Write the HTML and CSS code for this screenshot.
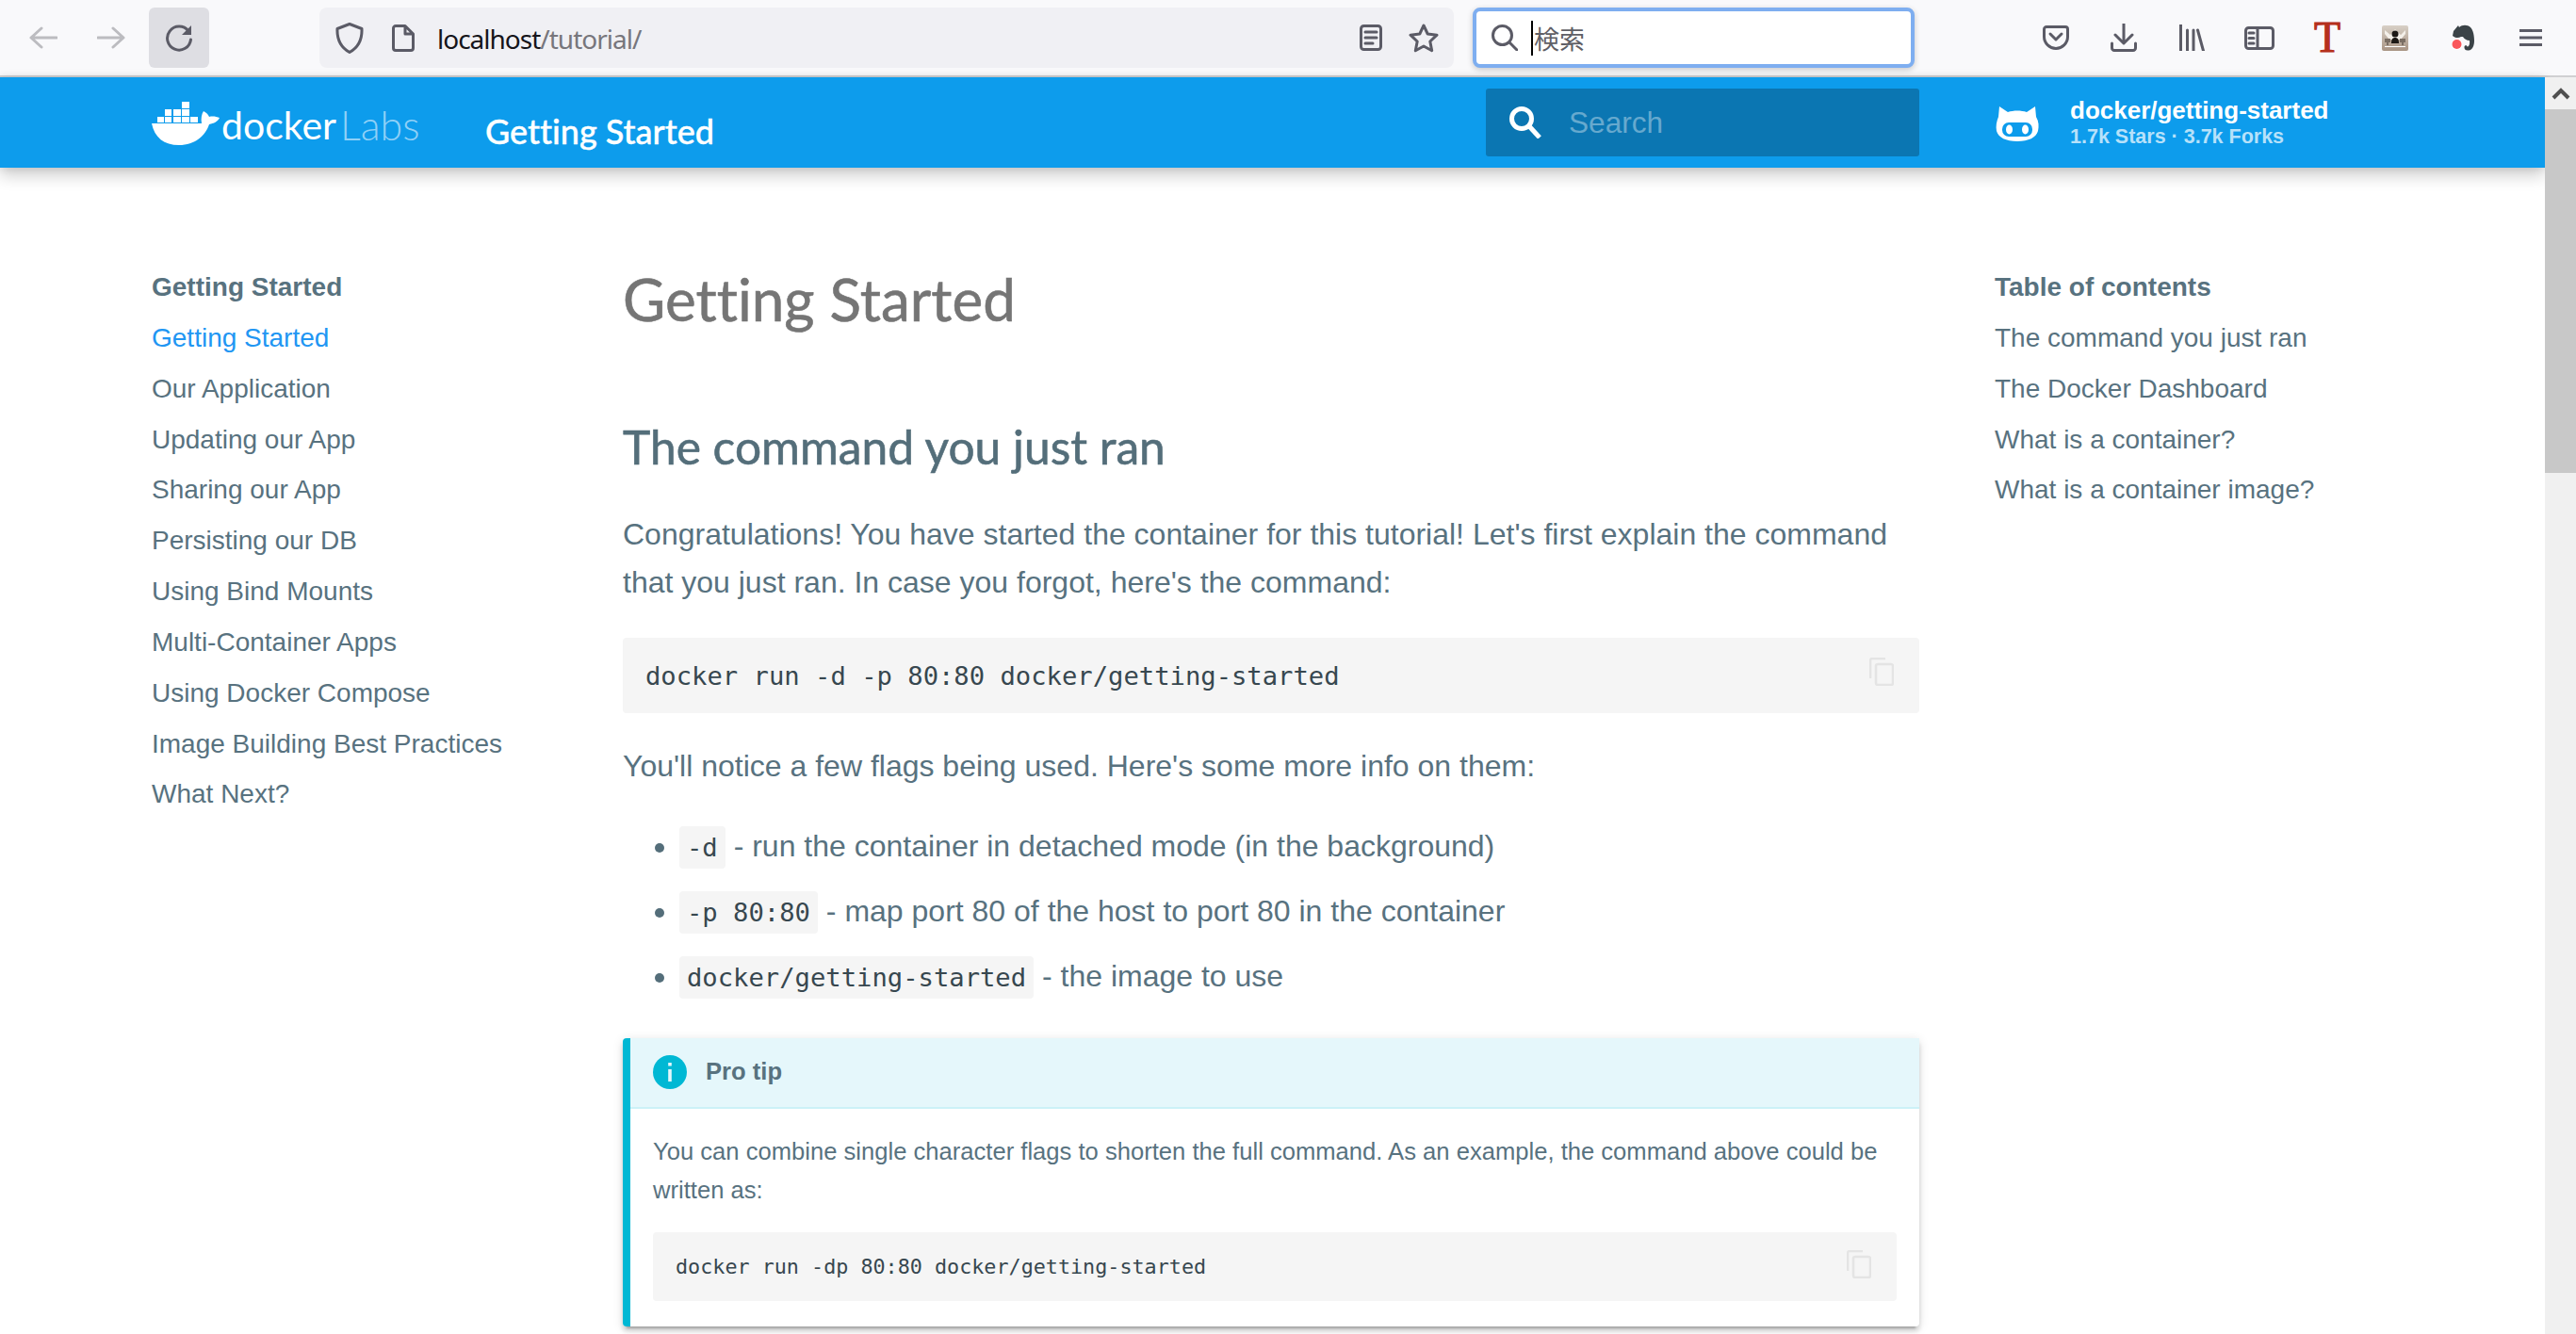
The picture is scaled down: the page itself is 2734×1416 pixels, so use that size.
FILE: index.html
```html
<!DOCTYPE html>
<html lang="en">
<head>
<meta charset="utf-8">
<title>Getting Started - Docker Labs</title>
<link rel="stylesheet" href="styles.css">
</head>
<body>
<div class="toolbar">
  <div class="tb-btn"><svg width="30" height="24" viewBox="0 0 30 24" class="ico-dim"><path d="M29 12H3M13 2 2 12l11 10"/></svg></div>
  <div class="tb-btn"><svg width="30" height="24" viewBox="0 0 30 24" class="ico-dim"><path d="M1 12h26M17 2l11 10-11 10"/></svg></div>
  <div class="tb-btn tb-active"><svg width="30" height="32" viewBox="0 0 30 32" class="ico"><path d="M25 9A12.5 12.5 0 1 0 27.5 18"/><path class="fill" d="M28 3v10H18z"/></svg></div>
  <div class="urlbar">
    <svg class="ico shield" width="30" height="33" viewBox="0 0 30 33"><path d="M15 1.500 28 6.500c.5 12-4 20-13 25C6 26.500 1.500 18.500 2 6.500z"/></svg>
    <svg class="ico pageico" width="24" height="29" viewBox="0 0 24 29"><path d="M4 1.500h10l8.500 8.500v15a2.500 2.500 0 0 1-2.500 2.500H4A2.500 2.500 0 0 1 1.500 25V4A2.500 2.500 0 0 1 4 1.500zM14 1.500V10h8.500"/></svg>
    <span class="host">localhost</span><span class="path">/tutorial/</span>
    <svg class="ico reader" width="24" height="28" viewBox="0 0 24 28"><rect x="1.500" y="1.500" width="21" height="25" rx="3"/><path d="M6 8h12M6 14h12M6 20h8"/></svg>
    <svg class="ico star" width="32" height="31" viewBox="0 0 32 31"><path d="M16 2l4.200 9 9.800 1.200-7.200 6.800 1.900 9.700L16 24l-8.700 4.700L9.200 19 2 12.200 11.800 11z"/></svg>
  </div>
  <div class="websearch">
    <svg class="ico" width="28" height="28" viewBox="0 0 28 28"><circle cx="11.500" cy="11.500" r="10"/><path d="M19 19l8 8"/></svg>
    <span class="caret"></span><span class="ws-text">検索</span>
  </div>
  <div class="tb-right">
    <div class="slot"><svg class="ico" width="28" height="26" viewBox="0 0 28 26"><path d="M4 1.500h20A2.500 2.500 0 0 1 26.500 4v8c0 7-6 12.500-12.500 12.500S1.500 19 1.500 12V4A2.500 2.500 0 0 1 4 1.500z"/><path d="M8 9l6 6 6-6"/></svg></div>
    <div class="slot"><svg class="ico" width="28" height="30" viewBox="0 0 28 30"><path d="M14 0v20M5 12l9 9 9-9M1.500 21v5a2.500 2.500 0 0 0 2.500 2.500h20a2.500 2.500 0 0 0 2.500-2.500v-5"/></svg></div>
    <div class="slot"><svg class="ico" width="27" height="28" viewBox="0 0 27 28"><path d="M1.500 0v28M8.500 6v22M15 6v22M19.500 6l6 22"/></svg></div>
    <div class="slot"><svg class="ico" width="32" height="25" viewBox="0 0 32 25"><rect x="1.500" y="1.500" width="29" height="22" rx="3"/><path d="M14 1.500v22M5 7h5M5 12.500h5M5 18h5"/></svg></div>
    <div class="slot"><span class="t-ext">T</span></div>
    <div class="slot"><svg width="28" height="27" viewBox="0 0 28 27"><defs><linearGradient id="ph" x1="0" y1="0" x2="0" y2="1"><stop offset="0" stop-color="#d8d0c6"/><stop offset="1" stop-color="#a89484"/></linearGradient></defs><rect width="28" height="27" rx="2" fill="url(#ph)"/><path d="M3 5l6 5 5-6 6 6 5-5v4l-5 6H8L3 9z" fill="#f4f0ea"/><circle cx="14" cy="9" r="3.500" fill="#1c1815"/><path d="M10 19c0-4 1-6 4-6s4 2 4 6z" fill="#1c1815"/><path d="M3 14h6v4H7v3H5v-3H3zM19 14h6v4h-2v3h-2v-3h-2z" fill="#7a6e64"/><path d="M3 22h22v1H3z" fill="#fff"/></svg></div>
    <div class="slot"><svg width="24" height="29" viewBox="0 0 24 29"><path fill="#3b4347" d="M2 7 7 1l1 2c3-3 9-3 12 0 3 3 4 9 4 14 0 6-2 10-6 10.500-3 .5-5-1.500-4.500-4 .5-2 3-1.500 3 0 2 0 3-2.500 2.500-6.500-3 0-6-2-7-4h-2c-3 2-7 1-9-1z"/><circle cx="5.500" cy="21" r="6" fill="#fff"/><circle cx="5.500" cy="21" r="5" fill="#f9575b"/></svg></div>
    <div class="slot"><svg class="ico" width="24" height="18" viewBox="0 0 24 18"><path d="M0 1.500h24M0 9h24M0 16.500h24"/></svg></div>
  </div>
</div>

<header class="site-header">
  <div class="logo">
    <svg width="80" height="55" viewBox="0 0 80 55" fill="#fff"><path d="M33 6h8v7h-8zM15 14h7v7h-7zM24 14h8v7h-8zM33 14h8v7h-8zM7 22h7v6H7zM15 22h7v6h-7zM24 22h8v6h-8zM33 22h8v6h-8zM42 22h8v6h-8z"/><path d="M1 29h53c-1-5 0-10 2-13 2 1 5 3 6 6 4-1 8 0 11 1-2 4-6 6-11 7-4 12-15 22-32 22C14 52 4 44 1 29z"/></svg>
    <span class="logo-docker">docker</span><span class="logo-labs">Labs</span>
  </div>
  <div class="site-title">Getting Started</div>
  <div class="site-search">
    <svg width="38" height="34" viewBox="0 0 38 34"><circle cx="13" cy="13" r="10.500"/><path d="M21 21l11 12"/></svg>
    <span>Search</span>
  </div>
  <div class="repo">
    <svg width="46" height="38" viewBox="-1 0 46 38"><path fill="#fff" d="M3 1l9 6c6-2 14-2 20 0l9-6 1 11c3 5 3 10 2 15-2 7-10 11-22 11S2 34 0 27c-1-5 0-10 2-15z"/><rect x="6" y="18" width="32" height="15" rx="7" fill="#0d9cec"/><ellipse cx="13.500" cy="25.500" rx="3.500" ry="5" fill="#fff"/><ellipse cx="30.500" cy="25.500" rx="3.500" ry="5" fill="#fff"/></svg>
    <div class="repo-text">
      <div class="repo-name">docker/getting-started</div>
      <div class="repo-facts">1.7k Stars · 3.7k Forks</div>
    </div>
  </div>
</header>

<div class="view">
  <div class="page">
    <nav class="side">
      <div class="nav-head">Getting Started</div>
      <a class="nav-link current">Getting Started</a>
      <a class="nav-link">Our Application</a>
      <a class="nav-link">Updating our App</a>
      <a class="nav-link">Sharing our App</a>
      <a class="nav-link">Persisting our DB</a>
      <a class="nav-link">Using Bind Mounts</a>
      <a class="nav-link">Multi-Container Apps</a>
      <a class="nav-link">Using Docker Compose</a>
      <a class="nav-link">Image Building Best Practices</a>
      <a class="nav-link">What Next?</a>
    </nav>
    <main class="content">
      <h1>Getting Started</h1>
      <h2>The command you just ran</h2>
      <p>Congratulations! You have started the container for this tutorial! Let's first explain the command that you just ran. In case you forgot, here's the command:</p>
      <div class="codeblock">
        <code>docker run -d -p 80:80 docker/getting-started</code>
        <svg class="copy" width="26" height="30" viewBox="0 0 26 30"><path d="M17 1H3a2 2 0 0 0-2 2v19"/><rect x="7" y="7" width="18" height="22" rx="2"/></svg>
      </div>
      <p class="after-code">You'll notice a few flags being used. Here's some more info on them:</p>
      <ul>
        <li><code class="inl">-d</code> - run the container in detached mode (in the background)</li>
        <li><code class="inl">-p 80:80</code> - map port 80 of the host to port 80 in the container</li>
        <li><code class="inl">docker/getting-started</code> - the image to use</li>
      </ul>
      <section class="tip">
        <div class="tip-title">
          <svg width="36" height="36" viewBox="0 0 36 36"><circle cx="18" cy="18" r="18" fill="#00b8d4"/><path d="M16.200 8h3.600v3.600h-3.600zM16.200 15h3.600v13h-3.600z" fill="#e5f7fb"/></svg>
          <span>Pro tip</span>
        </div>
        <div class="tip-body">
          <p>You can combine single character flags to shorten the full command. As an example, the command above could be written as:</p>
          <div class="codeblock small">
            <code>docker run -dp 80:80 docker/getting-started</code>
            <svg class="copy" width="26" height="30" viewBox="0 0 26 30"><path d="M17 1H3a2 2 0 0 0-2 2v19"/><rect x="7" y="7" width="18" height="22" rx="2"/></svg>
          </div>
        </div>
      </section>
    </main>
    <aside class="toc">
      <div class="nav-head">Table of contents</div>
      <a class="nav-link">The command you just ran</a>
      <a class="nav-link">The Docker Dashboard</a>
      <a class="nav-link">What is a container?</a>
      <a class="nav-link">What is a container image?</a>
    </aside>
  </div>
  <div class="scrollbar">
    <div class="sb-up"><svg width="20" height="14" viewBox="0 0 20 14"><path d="M2 12l8-8 8 8" fill="none" stroke="#505050" stroke-width="4"/></svg></div>
    <div class="sb-thumb"></div>
  </div>
</div>
</body>
</html>
```
FILE: styles.css
```css
* { box-sizing: border-box; }
html, body { margin: 0; height: 100%; overflow: hidden; }
body {
  display: flex; flex-direction: column; background: #fff;
  font-family: "Liberation Sans", Arial, sans-serif; color: #58727f;
}

/* browser chrome */
.toolbar {
  height: 82px; flex: none; display: flex; align-items: flex-start;
  padding: 8px 12px 0 14px; background: #f9f9fb; border-bottom: 2px solid #d0d0d2;
}
.ico, .ico-dim { fill: none; stroke: #5b5b66; stroke-width: 3; stroke-linecap: round; stroke-linejoin: round; display: block; }
.ico .fill { fill: #5b5b66; stroke: none; }
.ico-dim { stroke: #bcbcc0; }
.tb-btn { width: 64px; height: 64px; margin-right: 8px; border-radius: 6px; display: flex; align-items: center; justify-content: center; }
.tb-active { background: #dedee3; margin-right: 0; }
.urlbar {
  width: 1204px; height: 64px; margin-left: 117px; background: #f0f0f4; border-radius: 8px;
  display: flex; align-items: center; padding-left: 17px;
  font: 28px/1 "Noto Sans", "Open Sans", sans-serif; letter-spacing: -1px;
}
.shield { margin-right: 30px; flex: none; }
.pageico { margin-right: 24px; flex: none; }
.host { color: #15141a; padding-top: 2px; }
.path { color: #77767c; flex: 1; padding-top: 2px; }
.reader { margin-right: 28px; }
.star { margin-right: 16px; }
.websearch {
  width: 469px; height: 64px; margin-left: 20px; background: #fff; border: 4px solid #7eaef0;
  border-radius: 8px; display: flex; align-items: center; padding-left: 16px;
  box-shadow: 0 2px 6px rgba(0,0,0,.2); font: 27px/1 "Noto Sans CJK JP", "Noto Sans", sans-serif; color: #5f5f66;
}
.caret { width: 2px; height: 37px; background: #000; margin-left: 14px; margin-right: 1px; }
.tb-right { margin-left: auto; display: flex; height: 64px; align-items: center; }
.slot { width: 72px; display: flex; justify-content: center; align-items: center; }
.t-ext { font: 46px/1 "Liberation Serif", serif; color: #b5301c; -webkit-text-stroke: 1.200px #b5301c; }

/* site header */
.site-header {
  height: 96px; flex: none; width: 2701px; background: #0d9cec; color: #fff; position: relative; z-index: 2;
  display: flex; align-items: center; padding-left: 160px;
  box-shadow: 0 0 8px rgba(0,0,0,.1), 0 8px 16px rgba(0,0,0,.2);
}
.logo { width: 355px; display: flex; align-items: center; flex: none; height: 96px; padding-bottom: 4px; }
.logo svg { flex: none; margin-right: -5px; margin-top: 2px; }
.logo-docker { font: 41px/1 Lato, sans-serif; margin-top: 8px; }
.logo-labs { font: 300 43px/1 Lato, sans-serif; margin-top: 8px; margin-left: 4px; color: #8fd0f7; }
.site-title { font: 500 36px/1 Lato, sans-serif; font-variant-ligatures: none; -webkit-text-stroke: .4px #fff; width: 1062px; flex: none; margin-top: 18px; }
.site-search {
  width: 460px; height: 72px; background: #0b76b2; border-radius: 3px; flex: none;
  display: flex; align-items: center; padding-left: 25px; font-size: 31.600px; color: rgba(255,255,255,.38);
}
.site-search svg { fill: none; stroke: #fff; stroke-width: 5; margin-right: 25px; flex: none; }
.repo { margin-left: 81px; display: flex; align-items: center; flex: none; margin-top: 4px; }
.repo svg { margin-right: 33px; margin-top: -2px; }
.repo-name { font: bold 26px/27px "Liberation Sans", sans-serif; }
.repo-facts { font: bold 21.500px/29px "Liberation Sans", sans-serif; color: #b6e1fa; }

/* page */
.view { flex: 1; display: flex; min-height: 0; }
.page { flex: 1; display: flex; align-items: flex-start; overflow: hidden; padding-left: 161px; min-width: 0; }
.side { width: 500px; flex: none; padding-top: 100px; }
.toc { width: 500px; flex: none; margin-left: 80px; padding-top: 100px; }
.nav-head { font: bold 28px/53.850px "Liberation Sans", sans-serif; }
.nav-link { display: block; font: 28px/53.850px "Liberation Sans", sans-serif; white-space: nowrap; }
.current { color: #2196f3; }

.content { width: 1376px; flex: none; padding-top: 97px; }
h1 { margin: 0 0 82px; font: 400 62px/84px Lato, sans-serif; font-variant-ligatures: none; color: #757575; -webkit-text-stroke: .6px #757575; }
h2 { margin: 0 0 35px; font: 400 49.700px/66px Lato, sans-serif; font-variant-ligatures: none; color: #546e7a; -webkit-text-stroke: .6px #546e7a; }
p { margin: 0; font-size: 32px; line-height: 50.500px; }
.after-code { margin-top: 31px; }
code { font-family: "DejaVu Sans Mono", monospace; color: #37474f; }
.codeblock {
  margin-top: 34px; height: 80px; background: #f5f5f5; border-radius: 4px;
  display: flex; align-items: center; justify-content: space-between; padding: 0 27px 0 24px; font-size: 27.200px;
}
.copy { fill: none; stroke: #e4e4e4; stroke-width: 2.500; flex: none; margin-top: -9px; }
ul { margin: 34px 0 0; padding: 0 0 0 60px; font-size: 32px; line-height: 50px; }
li { margin-bottom: 19px; }
li::marker { color: #546e7a; }
.inl { background: #f5f5f5; border-radius: 4px; padding: 7px 8px; font-size: 27.200px; line-height: 1; }

.tip {
  margin-top: 41px; border-left: 8px solid #00b8d4; border-radius: 4px; height: 306px;
  box-shadow: 0 5px 5px rgba(0,0,0,.14), 0 2px 12px rgba(0,0,0,.12), 0 6px 2px -4px rgba(0,0,0,.2);
}
.tip-title {
  height: 75px; background: #e5f7fb; border-bottom: 2px solid #ccf1f7;
  display: flex; align-items: center; padding-left: 24px; font: bold 25.600px/1 "Liberation Sans", sans-serif;
}
.tip-title svg { margin-right: 20px; }
.tip-body { padding: 25px 24px 0; }
.tip-body p { font-size: 25.600px; line-height: 41px; }
.small { margin-top: 24px; height: 73px; font-size: 21.760px; }
.small .copy { margin-top: -5px; }
.scrollbar { width: 33px; flex: none; background: #f0f0f0; margin-top: -96px; position: relative; z-index: 3; }
.sb-up { height: 34px; display: flex; align-items: center; justify-content: center; }
.sb-thumb { height: 386px; background: #c8c8c8; }
```
